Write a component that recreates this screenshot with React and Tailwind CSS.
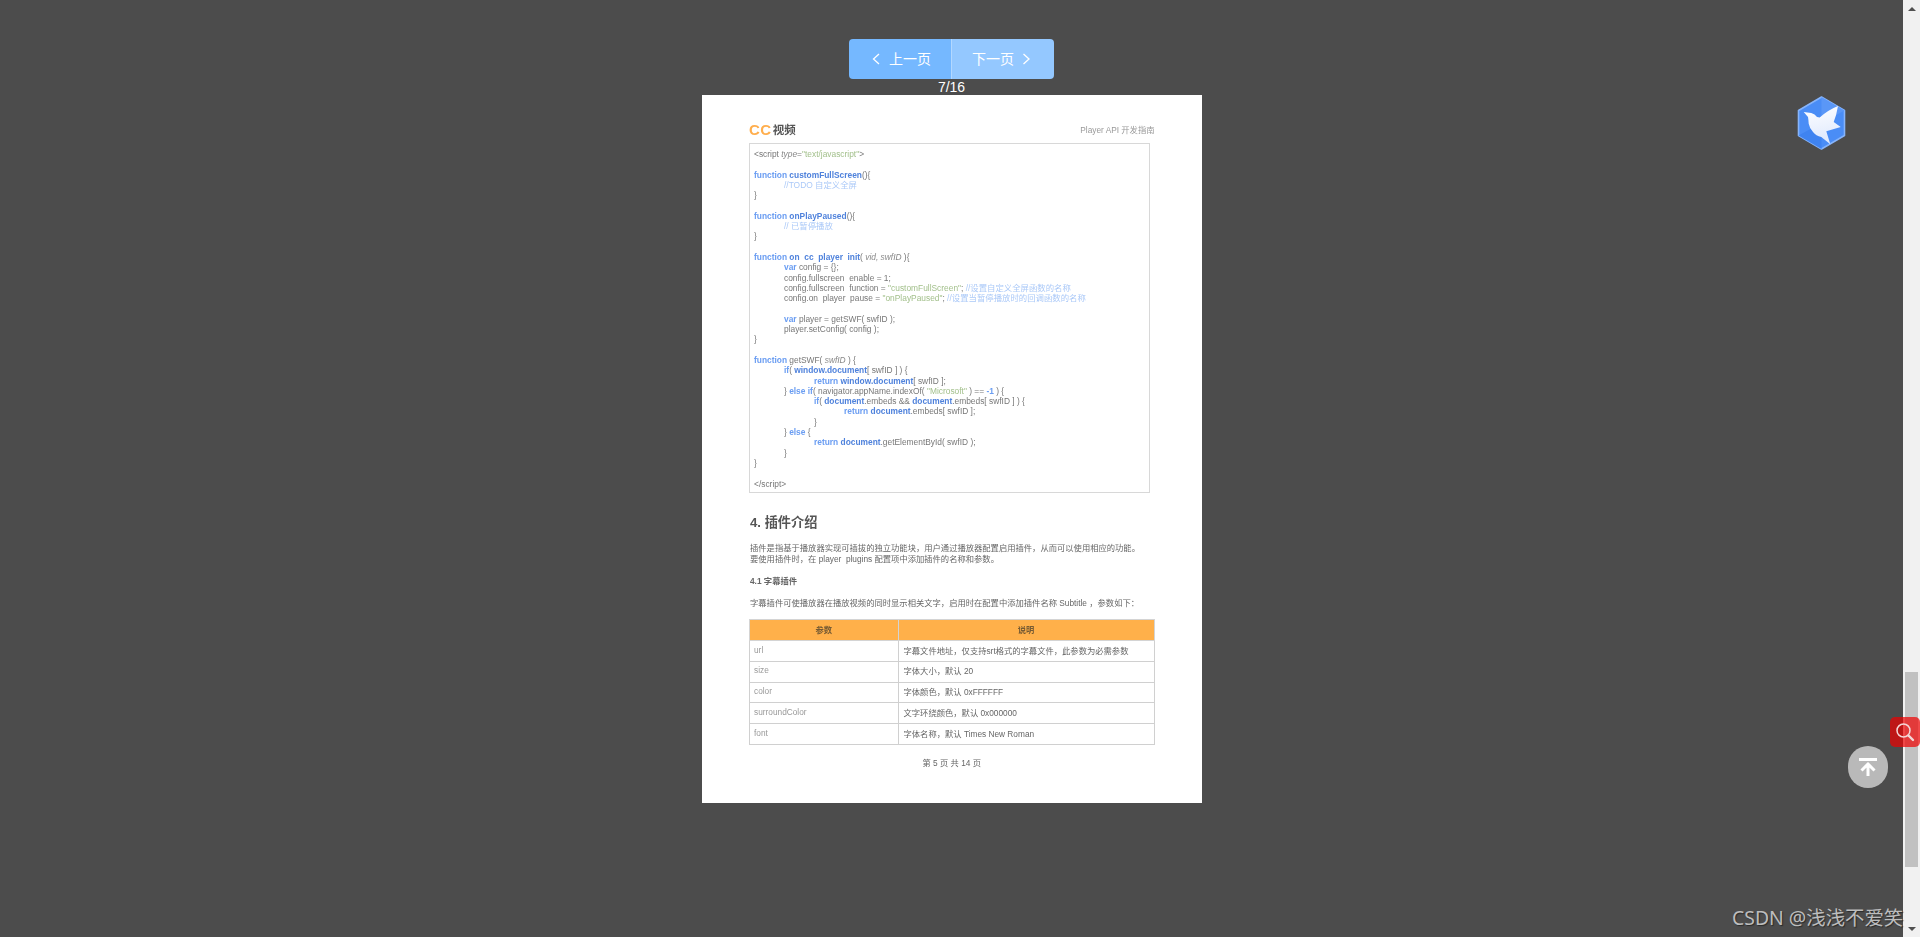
import React from 'react'

const tone = {
  t: 'text-[#777]',
  k: 'text-[#6a9df2] font-bold',
  n: 'text-[#4f82dc] font-bold',
  c: 'text-[#abc9f8]',
  s: 'text-[#a3c08c]',
  i: 'text-[#888] italic',
}

// [indent level, [tone, text], ...]
const codeLines = [
  [0, ['t', '<script '], ['i', 'type'], ['t', '='], ['s', '"text/javascript"'], ['t', '>']],
  [0],
  [0, ['k', 'function '], ['n', 'customFullScreen'], ['t', '(){']],
  [1, ['c', '//TODO 自定义全屏']],
  [0, ['t', '}']],
  [0],
  [0, ['k', 'function '], ['n', 'onPlayPaused'], ['t', '(){']],
  [1, ['c', '// 已暂停播放']],
  [0, ['t', '}']],
  [0],
  [0, ['k', 'function '], ['n', 'on  cc  player  init'], ['t', '( '], ['i', 'vid, swfID'], ['t', ' ){']],
  [1, ['k', 'var'], ['t', ' config = {};']],
  [1, ['t', 'config.fullscreen  enable = 1;']],
  [1, ['t', 'config.fullscreen  function = '], ['s', '"customFullScreen"'], ['t', '; '], ['c', '//设置自定义全屏函数的名称']],
  [1, ['t', 'config.on  player  pause = '], ['s', '"onPlayPaused"'], ['t', '; '], ['c', '//设置当暂停播放时的回调函数的名称']],
  [0],
  [1, ['k', 'var'], ['t', ' player = getSWF( swfID );']],
  [1, ['t', 'player.setConfig( config );']],
  [0, ['t', '}']],
  [0],
  [0, ['k', 'function'], ['t', ' getSWF( '], ['i', 'swfID'], ['t', ' ) {']],
  [1, ['k', 'if'], ['t', '( '], ['n', 'window.document'], ['t', '[ swfID ] ) {']],
  [2, ['k', 'return '], ['n', 'window.document'], ['t', '[ swfID ];']],
  [1, ['t', '} '], ['k', 'else if'], ['t', '( navigator.appName.indexOf( '], ['s', '"Microsoft"'], ['t', ' ) == '], ['k', '-1'], ['t', ' ) {']],
  [2, ['k', 'if'], ['t', '( '], ['n', 'document'], ['t', '.embeds && '], ['n', 'document'], ['t', '.embeds[ swfID ] ) {']],
  [3, ['k', 'return '], ['n', 'document'], ['t', '.embeds[ swfID ];']],
  [2, ['t', '}']],
  [1, ['t', '} '], ['k', 'else'], ['t', ' {']],
  [2, ['k', 'return '], ['n', 'document'], ['t', '.getElementById( swfID );']],
  [1, ['t', '}']],
  [0, ['t', '}']],
  [0],
  [0, ['t', '</script>']],
]

const indentClass = ['pl-0', 'pl-[30px]', 'pl-[60px]', 'pl-[90px]']

const params = [
  ['url', '字幕文件地址，仅支持srt格式的字幕文件，此参数为必需参数'],
  ['size', '字体大小，默认 20'],
  ['color', '字体颜色，默认 0xFFFFFF'],
  ['surroundColor', '文字环绕颜色，默认 0x000000'],
  ['font', '字体名称，默认 Times New Roman'],
]

const PdfPage = () => (
  <div className="w-[500px] h-[708px] shrink-0 bg-white pl-[47.5px] pr-[47px] pt-[28px] text-[8.3px] text-[#666] blur-[0.5px] font-['Liberation_Sans','Noto_Sans_CJK_SC',sans-serif]">
    <div className="flex items-start justify-between h-[20px]">
      <div className="flex items-center h-[14px]">
        <span className="text-[#ffae4d] text-[15px] leading-[14px] font-bold tracking-[0.5px]">CC</span>
        <span className="text-[#555] text-[11.5px] leading-[14px] font-bold ml-[1px]">视频</span>
      </div>
      <span className="text-[#999] leading-[14px]">Player API 开发指南</span>
    </div>
    <div className="w-[401px] h-[350px] border border-[#d8d8d8] pl-[4px] pt-[5px] text-[8.4px] leading-[10.3px] whitespace-pre">
      {codeLines.map((line, i) => (
        <div key={i} className={`h-[10.3px] ${indentClass[line[0]]}`}>
          {line.slice(1).map(([t, text], j) => (
            <span key={j} className={tone[t]}>{text}</span>
          ))}
        </div>
      ))}
    </div>
    <h2 className="mt-[22px] text-[13.2px] leading-[16px] font-bold text-[#555] pl-[1px]">4. 插件介绍</h2>
    <p className="mt-[12px] leading-[11px] pl-[1px] whitespace-pre">
      插件是指基于播放器实现可插拔的独立功能块，用户通过播放器配置启用插件，从而可以使用相应的功能。<br />
      要使用插件时，在 player  plugins 配置项中添加插件的名称和参数。
    </p>
    <h3 className="mt-[11px] leading-[11px] font-bold pl-[1px]">4.1 字幕插件</h3>
    <p className="mt-[11px] leading-[11px] pl-[1px]">字幕插件可使播放器在播放视频的同时显示相关文字，启用时在配置中添加插件名称 Subtitle ，参数如下：</p>
    <table className="mt-[10px] w-[405.5px] table-fixed border-collapse">
      <thead>
        <tr className="h-[21px] bg-[#ffb04a] text-[#775b33] font-bold">
          <th className="w-[148.5px] border border-[#d4d4d4] font-bold">参数</th>
          <th className="border border-[#d4d4d4] font-bold">说明</th>
        </tr>
      </thead>
      <tbody>
        {params.map(([name, desc]) => (
          <tr key={name} className="h-[20.8px]">
            <td className="border border-[#d0d0d0] pl-[4px] pb-[2px] text-[#999]">{name}</td>
            <td className="border border-[#d0d0d0] pl-[5px]">{desc}</td>
          </tr>
        ))}
      </tbody>
    </table>
    <div className="mt-[13px] text-center leading-[11px]">第 5 页 共 14 页</div>
  </div>
)

const Pager = () => (
  <div className="flex h-[40px] mt-[39px] text-white text-[14px] font-['Liberation_Sans','Noto_Sans_CJK_SC',sans-serif]">
    <button className="w-[103px] flex items-center pl-[20px] bg-[#75b8ff] rounded-l-[4px] border-r border-[#b3d8ff]">
      <svg width="14" height="14" viewBox="0 0 14 14" fill="none" stroke="currentColor" strokeWidth="1.3">
        <path d="M10 2 4.5 7 10 12" />
      </svg>
      <span className="ml-[6px]">上一页</span>
    </button>
    <button className="w-[102px] flex items-center pl-[20px] bg-[#94c8ff] rounded-r-[4px]">
      <span className="mr-[5px]">下一页</span>
      <svg width="14" height="14" viewBox="0 0 14 14" fill="none" stroke="currentColor" strokeWidth="1.3">
        <path d="M4.5 2 10 7 4.5 12" />
      </svg>
    </button>
  </div>
)

const BirdLogo = () => (
  <svg width="49" height="54" viewBox="0 0 49 54" className="absolute left-[1797px] top-[96px]">
    <defs>
      <linearGradient id="birdFill" x1="0" y1="0" x2="0.2" y2="1">
        <stop offset="0" stopColor="#ffffff" />
        <stop offset="1" stopColor="#dfe9fd" />
      </linearGradient>
    </defs>
    <path d="M24.5 1 47.5 14.5V39.5L24.5 53 1.5 39.5V14.5Z" fill="#4a8df6" stroke="#86b4fb" strokeWidth="1.6" strokeLinejoin="round" />
    <path d="M24.5 1 47.5 14.5 24.5 27Z" fill="#5a97f7" />
    <path d="M1.5 39.5 24.5 27 24.5 53Z" fill="#3f83f0" />
    <path d="M6.7 16 14.3 17Q18 18 20 21L22.7 21.5Q31 14 41 10 39.5 19 36.7 26L43.7 31 29.3 35.3 33.3 48.3 24.3 41Q19 40 16 36 12.5 32 11.7 27.7 11.5 24 11 21Z" fill="url(#birdFill)" />
  </svg>
)

const BackTop = () => (
  <div className="absolute left-[1848px] top-[746px] w-[40px] h-[42px] rounded-full bg-[#b9b9b9] flex items-center justify-center">
    <svg width="22" height="20" viewBox="0 0 22 20" fill="none" stroke="#fff" strokeWidth="3">
      <path d="M2 2.5H20" />
      <path d="M11 19V7M4.5 13.5 11 7 17.5 13.5" />
    </svg>
  </div>
)

const SearchTab = () => (
  <div className="absolute left-[1890px] top-[717px] w-[30px] h-[30px] rounded-[5px] bg-[rgba(240,0,0,0.7)] flex items-center justify-center">
    <svg width="20" height="20" viewBox="0 0 20 20" fill="none" stroke="#f3d6d6" strokeWidth="1.5">
      <circle cx="8.5" cy="8.5" r="6.5" />
      <path d="M13.5 13.5 18 18" strokeWidth="2.4" strokeLinecap="round" />
    </svg>
  </div>
)

const Scrollbar = () => (
  <div className="w-[17px] h-full shrink-0 bg-[#f1f1f1] flex flex-col items-center">
    <div className="h-[17px] shrink-0 flex items-center justify-center">
      <div className="w-0 h-0 border-x-[4px] border-x-transparent border-b-[4px] border-b-[#505050]" />
    </div>
    <div className="flex-1 w-[13px] flex flex-col">
      <div className="h-[655px] shrink-0" />
      <div className="h-[195px] shrink-0 bg-[#c1c1c1]" />
    </div>
    <div className="h-[17px] shrink-0 flex items-center justify-center">
      <div className="w-0 h-0 border-x-[4px] border-x-transparent border-t-[4px] border-t-[#505050]" />
    </div>
  </div>
)

export default function App() {
  return (
    <div className="relative flex w-[1920px] h-[937px] overflow-hidden bg-[#4c4c4c]">
      <div className="flex-1 flex flex-col items-center">
        <Pager />
        <div className="h-[16px] text-white text-[14px] leading-[16px] font-['Liberation_Sans',sans-serif]">7/16</div>
        <PdfPage />
      </div>
      <Scrollbar />
      <BirdLogo />
      <SearchTab />
      <BackTop />
      <div className="absolute left-[1732px] top-[903px] text-[19.4px] leading-[30px] whitespace-nowrap text-[#bdbdbd] [text-shadow:1px_1px_1px_#2a2a2a] font-['Noto_Sans','Noto_Sans_CJK_SC',sans-serif]">CSDN @浅浅不爱笑</div>
    </div>
  )
}
